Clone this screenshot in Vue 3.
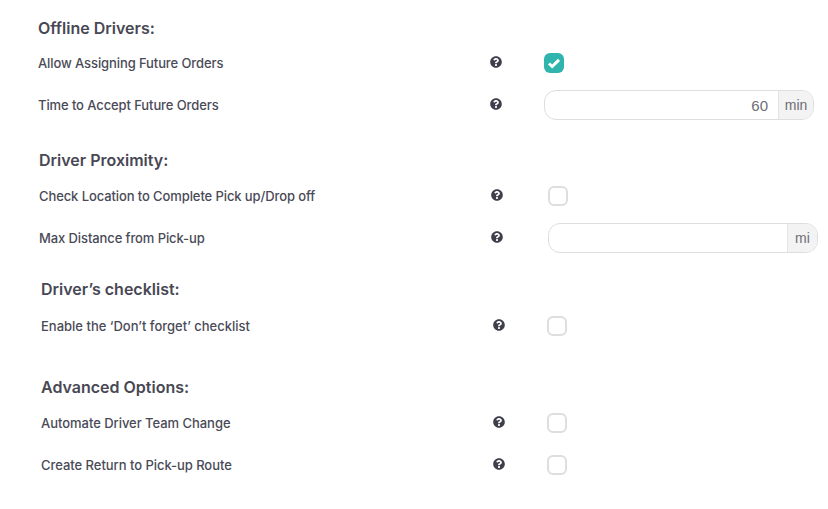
<template>
  <div class="page">
    <section v-for="sec in sections" :key="sec.title" class="section" :class="sec.cls">
      <h3 class="title">{{ sec.title }}</h3>
      <div v-for="row in sec.rows" :key="row.label" class="row">
        <span class="label">{{ row.label }}</span>
        <svg class="help" viewBox="0 0 512 512" aria-hidden="true">
          <path d="M504 256c0 137-111 248-248 248S8 393 8 256 119 8 256 8s248 111 248 248zM262.700 90c-54.500 0-89.300 23-116.600 63.800-3.500 5.300-2.400 12.400 2.700 16.300l34.700 26.300c5.200 3.900 12.600 3 16.700-2.100 17.900-22.700 30.100-35.800 57.300-35.800 20.400 0 45.700 13.100 45.700 33 0 15-12.400 22.700-32.600 34-23.600 13.200-54.800 29.700-54.800 70.900V300c0 6.600 5.400 12 12 12h56c6.600 0 12-5.400 12-12v-1.300c0-28.600 83.500-29.800 83.500-107.100C379.300 133.300 318.800 90 262.700 90zM256 339c-25.400 0-46 20.600-46 46s20.600 46 46 46 46-20.600 46-46-20.600-46-46-46z" />
        </svg>
        <div class="control">
          <span v-if="row.type === 'check'" class="check" :class="{ on: row.on }">
            <svg v-if="row.on" viewBox="0 0 20 20" aria-hidden="true">
              <path d="M5 10.500l3.200 3 6.800-6.600" />
            </svg>
          </span>
          <div v-else class="input">
            <span class="value">{{ row.value }}</span>
            <span class="unit">{{ row.unit }}</span>
          </div>
        </div>
      </div>
    </section>
  </div>
</template>

<script setup>
const sections = [
  {
    title: 'Offline Drivers:',
    cls: 'offline',
    rows: [
      { label: 'Allow Assigning Future Orders', type: 'check', on: true },
      { label: 'Time to Accept Future Orders', type: 'input', value: '60', unit: 'min' }
    ]
  },
  {
    title: 'Driver Proximity:',
    cls: 'proximity',
    rows: [
      { label: 'Check Location to Complete Pick up/Drop off', type: 'check' },
      { label: 'Max Distance from Pick-up', type: 'input', value: '', unit: 'mi' }
    ]
  },
  {
    title: 'Driver’s checklist:',
    cls: 'checklist',
    rows: [{ label: 'Enable the ‘Don’t forget’ checklist', type: 'check' }]
  },
  {
    title: 'Advanced Options:',
    cls: 'advanced',
    rows: [
      { label: 'Automate Driver Team Change', type: 'check' },
      { label: 'Create Return to Pick-up Route', type: 'check' }
    ]
  }
];
</script>

<style>
html,
body {
  margin: 0;
  background: #fff;
}
</style>

<style scoped>
.page {
  width: 828px;
  height: 509px;
  padding-top: 14px;
  box-sizing: border-box;
  overflow: hidden;
  font-family: Inter, "Noto Sans", sans-serif;
  color: #4a4a57;
}

.section {
  padding-left: 41px;
}

.offline {
  padding-left: 38px;
  margin-bottom: 20px;
}

.proximity {
  padding-left: 39px;
  margin-bottom: 16px;
}

.checklist {
  margin-bottom: 26px;
}

.title {
  margin: 0 0 1px;
  height: 28px;
  line-height: 28px;
  font-size: 16px;
  font-weight: 600;
  color: #484854;
}

.offline .title {
  margin-bottom: 0;
}

.checklist .title {
  margin-bottom: 2px;
}

.row {
  display: grid;
  grid-template-columns: 451px 55px 270px;
  align-items: center;
  height: 42px;
}

.proximity .row {
  grid-template-columns: 451px 58px 270px;
}

.label {
  font-size: 13px;
  font-weight: 500;
  white-space: nowrap;
}

.offline .label,
.proximity .label {
  letter-spacing: -0.1px;
}

.advanced .label {
  letter-spacing: -0.04px;
}

.help {
  display: block;
  width: 12px;
  height: 12px;
  margin: 0 0 2px 1px;
  fill: #3f3f4c;
}

.control {
  display: flex;
  align-items: center;
}

.check {
  width: 20px;
  height: 20px;
  box-sizing: border-box;
  border: 2px solid #dedede;
  border-radius: 6px;
  background: #fff;
}

.check.on {
  border: 0;
  background: #2fb5ad;
}

.check svg {
  display: block;
  width: 20px;
  height: 20px;
  fill: none;
  stroke: #fff;
  stroke-width: 3;
}

.input {
  display: flex;
  width: 270px;
  height: 30px;
  box-sizing: border-box;
  border: 1px solid #dedede;
  border-radius: 12px;
  overflow: hidden;
  font-family: "Liberation Sans", Arial, sans-serif;
  font-size: 14px;
  color: #6e6e76;
}

.value {
  flex: 1;
  padding-right: 10px;
  font-size: 15px;
  line-height: 29px;
  text-align: right;
}

.unit {
  width: 35px;
  box-sizing: border-box;
  line-height: 29px;
  text-align: center;
  background: #f3f3f3;
  border-left: 1px solid #e4e4e4;
}

.proximity .unit {
  width: 30px;
}
</style>
